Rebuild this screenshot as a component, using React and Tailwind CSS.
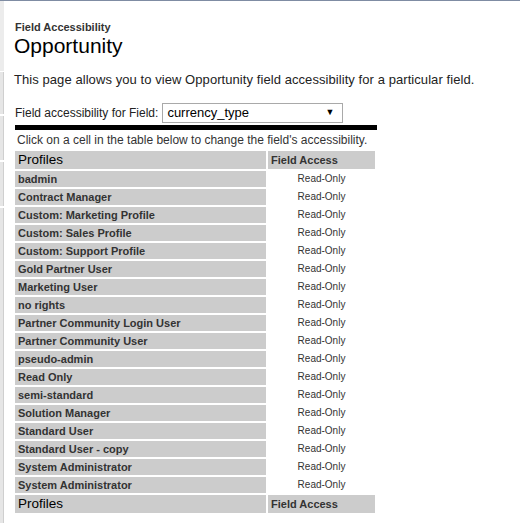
import React from "react";

const rows = [
  "badmin",
  "Contract Manager",
  "Custom: Marketing Profile",
  "Custom: Sales Profile",
  "Custom: Support Profile",
  "Gold Partner User",
  "Marketing User",
  "no rights",
  "Partner Community Login User",
  "Partner Community User",
  "pseudo-admin",
  "Read Only",
  "semi-standard",
  "Solution Manager",
  "Standard User",
  "Standard User - copy",
  "System Administrator",
  "System Administrator",
];

function HeaderRow() {
  return (
    <>
      <div className="h-[18px] bg-[#cccccc] pl-[3px] text-[13.5px] leading-[18px] text-black">
        Profiles
      </div>
      <div className="h-[18px] bg-[#cccccc] pl-[3px] text-[11px] leading-[18px] font-bold text-[#333]">
        Field Access
      </div>
    </>
  );
}

export default function App() {
  return (
    <div
      className="w-[520px] h-[523px] bg-white overflow-hidden flex flex-col"
      style={{ fontFamily: '"Liberation Sans", Arial, sans-serif' }}
    >
      <div className="h-px bg-[#7f8ca3] shrink-0" />
      <div className="flex flex-1">
        <div className="w-[4px] flex flex-col shrink-0">
          <div className="h-[70px] bg-[#ececec]" />
          <div className="h-[42px] mt-[1px] bg-[#e6e6e6] border-r border-[#cfcfcf]" />
          <div className="h-[44px] mt-[2px] bg-[#e6e6e6] border-r border-[#cfcfcf]" />
          <div className="h-[44px] mt-[2px] bg-[#e6e6e6] border-r border-[#cfcfcf]" />
          <div className="flex-1 mt-[2px] bg-[#e6e6e6] border-r border-[#cfcfcf]" />
        </div>
        <div className="flex flex-col pl-[9px] text-[#222]">
          <div className="pt-[20px] pl-[2px] text-[11px] leading-[13px] font-bold text-[#333]">
            Field Accessibility
          </div>
          <div className="text-[21px] leading-[24px] text-black pl-px">Opportunity</div>
          <div className="mt-[14px] pl-px text-[13px] leading-[15px] tracking-[0.07px] text-[#222]">
            This page allows you to view Opportunity field accessibility for a particular field.
          </div>
          <div className="mt-[16px] pl-[2px] flex items-center gap-[4px] text-[12px] text-[#222]">
            <span>Field accessibility for Field:</span>
            <div className="w-[181px] h-[20px] border border-[#a9a9a9] bg-white flex items-center justify-between pl-[4px] pr-[8px]">
              <span className="text-[13px] text-black">currency_type</span>
              <span className="text-[9px] text-black">▼</span>
            </div>
          </div>
          <div className="mt-[2px] ml-[2px] w-[362px] h-[5px] bg-black" />
          <div className="mt-[3px] pl-[4px] text-[12px] leading-[14px] text-[#333]">
            Click on a cell in the table below to change the field&apos;s accessibility.
          </div>
          <div className="mt-[4px] ml-[2px] grid grid-cols-[251px_107px] gap-[2px]">
            <HeaderRow />
            {rows.map((r, i) => (
              <React.Fragment key={i}>
                <div className="h-4 bg-[#cccccc] pl-[3px] text-[11px] leading-4 font-bold text-[#333]">
                  {r}
                </div>
                <div className="h-4 text-center text-[10px] leading-4 text-[#333]">Read-Only</div>
              </React.Fragment>
            ))}
            <HeaderRow />
          </div>
        </div>
      </div>
    </div>
  );
}
